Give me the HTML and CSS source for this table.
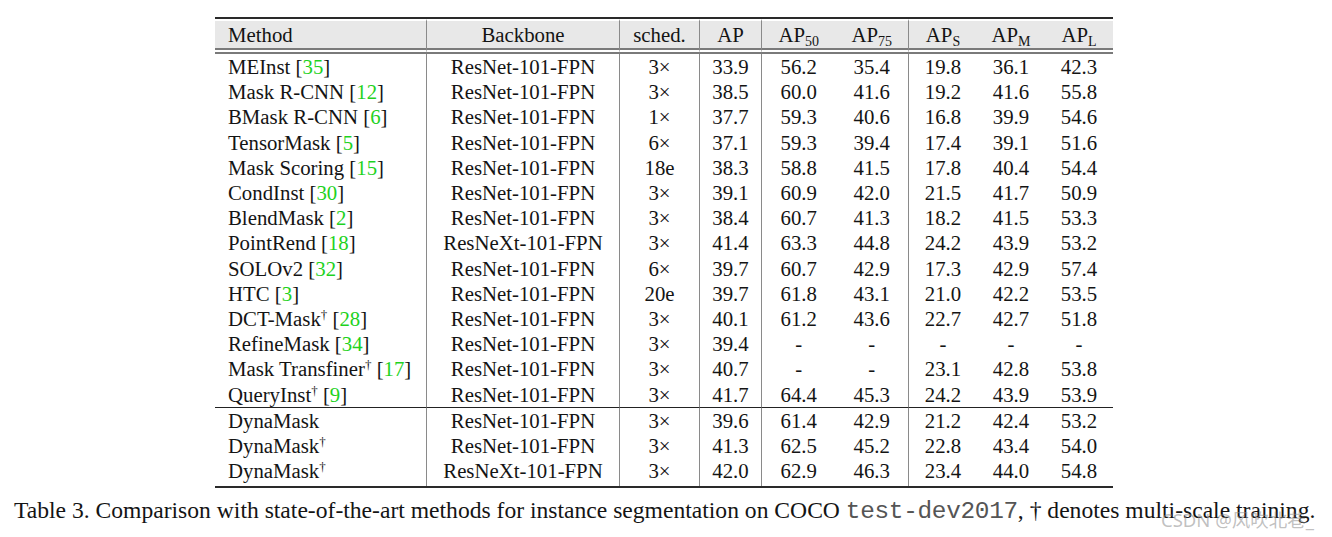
FILE: index.html
```html
<!DOCTYPE html>
<html>
<head>
<meta charset="utf-8">
<link rel="stylesheet" href="styles.css">
</head>
<body>
<div class="page">
  <table class="results">
    <colgroup>
      <col class="c-method"><col class="c-backbone"><col class="c-sched"><col class="c-ap">
      <col class="c-ap2"><col class="c-ap2"><col class="c-ap3"><col class="c-ap3"><col class="c-ap3">
    </colgroup>
    <thead>
      <tr>
        <th class="method vr">Method</th>
        <th class="vr">Backbone</th>
        <th class="vr">sched.</th>
        <th class="vr">AP</th>
        <th>AP<sub>50</sub></th>
        <th class="vr">AP<sub>75</sub></th>
        <th>AP<sub>S</sub></th>
        <th>AP<sub>M</sub></th>
        <th>AP<sub>L</sub></th>
      </tr>
    </thead>
    <tbody class="first">
      <tr><td class="method vr">MEInst <span class="cite">[<b>35</b>]</span></td><td class="vr">ResNet-101-FPN</td><td class="vr">3×</td><td class="vr">33.9</td><td>56.2</td><td class="vr">35.4</td><td>19.8</td><td>36.1</td><td>42.3</td></tr>
      <tr><td class="method vr">Mask R-CNN <span class="cite">[<b>12</b>]</span></td><td class="vr">ResNet-101-FPN</td><td class="vr">3×</td><td class="vr">38.5</td><td>60.0</td><td class="vr">41.6</td><td>19.2</td><td>41.6</td><td>55.8</td></tr>
      <tr><td class="method vr">BMask R-CNN <span class="cite">[<b>6</b>]</span></td><td class="vr">ResNet-101-FPN</td><td class="vr">1×</td><td class="vr">37.7</td><td>59.3</td><td class="vr">40.6</td><td>16.8</td><td>39.9</td><td>54.6</td></tr>
      <tr><td class="method vr">TensorMask <span class="cite">[<b>5</b>]</span></td><td class="vr">ResNet-101-FPN</td><td class="vr">6×</td><td class="vr">37.1</td><td>59.3</td><td class="vr">39.4</td><td>17.4</td><td>39.1</td><td>51.6</td></tr>
      <tr><td class="method vr">Mask Scoring <span class="cite">[<b>15</b>]</span></td><td class="vr">ResNet-101-FPN</td><td class="vr">18e</td><td class="vr">38.3</td><td>58.8</td><td class="vr">41.5</td><td>17.8</td><td>40.4</td><td>54.4</td></tr>
      <tr><td class="method vr">CondInst <span class="cite">[<b>30</b>]</span></td><td class="vr">ResNet-101-FPN</td><td class="vr">3×</td><td class="vr">39.1</td><td>60.9</td><td class="vr">42.0</td><td>21.5</td><td>41.7</td><td>50.9</td></tr>
      <tr><td class="method vr">BlendMask <span class="cite">[<b>2</b>]</span></td><td class="vr">ResNet-101-FPN</td><td class="vr">3×</td><td class="vr">38.4</td><td>60.7</td><td class="vr">41.3</td><td>18.2</td><td>41.5</td><td>53.3</td></tr>
      <tr><td class="method vr">PointRend <span class="cite">[<b>18</b>]</span></td><td class="vr">ResNeXt-101-FPN</td><td class="vr">3×</td><td class="vr">41.4</td><td>63.3</td><td class="vr">44.8</td><td>24.2</td><td>43.9</td><td>53.2</td></tr>
      <tr><td class="method vr">SOLOv2 <span class="cite">[<b>32</b>]</span></td><td class="vr">ResNet-101-FPN</td><td class="vr">6×</td><td class="vr">39.7</td><td>60.7</td><td class="vr">42.9</td><td>17.3</td><td>42.9</td><td>57.4</td></tr>
      <tr><td class="method vr">HTC <span class="cite">[<b>3</b>]</span></td><td class="vr">ResNet-101-FPN</td><td class="vr">20e</td><td class="vr">39.7</td><td>61.8</td><td class="vr">43.1</td><td>21.0</td><td>42.2</td><td>53.5</td></tr>
      <tr><td class="method vr">DCT-Mask<sup>†</sup> <span class="cite">[<b>28</b>]</span></td><td class="vr">ResNet-101-FPN</td><td class="vr">3×</td><td class="vr">40.1</td><td>61.2</td><td class="vr">43.6</td><td>22.7</td><td>42.7</td><td>51.8</td></tr>
      <tr><td class="method vr">RefineMask <span class="cite">[<b>34</b>]</span></td><td class="vr">ResNet-101-FPN</td><td class="vr">3×</td><td class="vr">39.4</td><td>-</td><td class="vr">-</td><td>-</td><td>-</td><td>-</td></tr>
      <tr><td class="method vr">Mask Transfiner<sup>†</sup> <span class="cite">[<b>17</b>]</span></td><td class="vr">ResNet-101-FPN</td><td class="vr">3×</td><td class="vr">40.7</td><td>-</td><td class="vr">-</td><td>23.1</td><td>42.8</td><td>53.8</td></tr>
      <tr><td class="method vr">QueryInst<sup>†</sup> <span class="cite">[<b>9</b>]</span></td><td class="vr">ResNet-101-FPN</td><td class="vr">3×</td><td class="vr">41.7</td><td>64.4</td><td class="vr">45.3</td><td>24.2</td><td>43.9</td><td>53.9</td></tr>
    </tbody>
    <tbody class="ours">
      <tr><td class="method vr">DynaMask</td><td class="vr">ResNet-101-FPN</td><td class="vr">3×</td><td class="vr">39.6</td><td>61.4</td><td class="vr">42.9</td><td>21.2</td><td>42.4</td><td>53.2</td></tr>
      <tr><td class="method vr">DynaMask<sup>†</sup></td><td class="vr">ResNet-101-FPN</td><td class="vr">3×</td><td class="vr">41.3</td><td>62.5</td><td class="vr">45.2</td><td>22.8</td><td>43.4</td><td>54.0</td></tr>
      <tr class="last"><td class="method vr">DynaMask<sup>†</sup></td><td class="vr">ResNeXt-101-FPN</td><td class="vr">3×</td><td class="vr">42.0</td><td>62.9</td><td class="vr">46.3</td><td>23.4</td><td>44.0</td><td>54.8</td></tr>
    </tbody>
  </table>
  <p class="caption">Table 3. Comparison with state-of-the-art methods for instance segmentation on COCO <code>test-dev2017</code>, † denotes multi-scale training.</p>
  <span class="watermark">CSDN @风吹北巷_</span>
</div>
</body>
</html>
```

FILE: styles.css
```css
html, body {
  margin: 0;
  padding: 0;
  background: #fff;
}

.page {
  position: relative;
  width: 1332px;
  height: 537px;
  padding-top: 17px;
  box-sizing: border-box;
  font-family: "Liberation Serif", "Times New Roman", serif;
  color: #141414;
}

.results {
  margin-left: 215px;
  width: 898px;
  table-layout: fixed;
  border-collapse: separate;
  border-spacing: 0;
  border-top: 2px solid #2a2a2a;
  border-bottom: 2px solid #2a2a2a;
  font-size: 20.8px;
}

.c-method { width: 212px; }
.c-backbone { width: 193px; }
.c-sched { width: 80px; }
.c-ap { width: 62px; }
.c-ap2 { width: 73.5px; }
.c-ap3 { width: 68px; }

.results th,
.results td {
  padding: 0;
  text-align: center;
  white-space: nowrap;
  font-weight: normal;
}

.results th {
  background: #e8e8e8;
  background-clip: padding-box;
  border-top: 2px solid transparent;
  border-bottom: 6px double #7a7a7a;
  height: 27px;
  line-height: 27px;
}

.results td {
  height: 25.2px;
  line-height: 25.2px;
}

.results .vr {
  border-right: 1.5px solid #8a8a8a;
}

.results .method {
  text-align: left;
  padding-left: 13px;
}

.results sub {
  font-size: 14px;
  vertical-align: -4px;
  line-height: 0;
}

.results sup {
  font-size: 13px;
  vertical-align: 7px;
  line-height: 0;
}

.cite b {
  font-weight: normal;
  color: #1ed21e;
}

.ours tr:first-child td {
  border-top: 1px solid #222;
}

.results tr.last td {
  padding-bottom: 3px;
}

.caption {
  margin: 8px 0 0 14px;
  font-size: 23.6px;
  line-height: 28px;
  white-space: nowrap;
}

.caption code {
  font-family: "Liberation Mono", "DejaVu Sans Mono", monospace;
  font-size: 24.4px;
  color: #555;
  letter-spacing: -0.3px;
}

.watermark {
  position: absolute;
  left: 1161px;
  top: 506px;
  font-family: "Noto Sans", "Noto Sans CJK SC", sans-serif;
  font-size: 18.5px;
  color: rgba(140, 140, 140, 0.55);
  white-space: nowrap;
}
```
